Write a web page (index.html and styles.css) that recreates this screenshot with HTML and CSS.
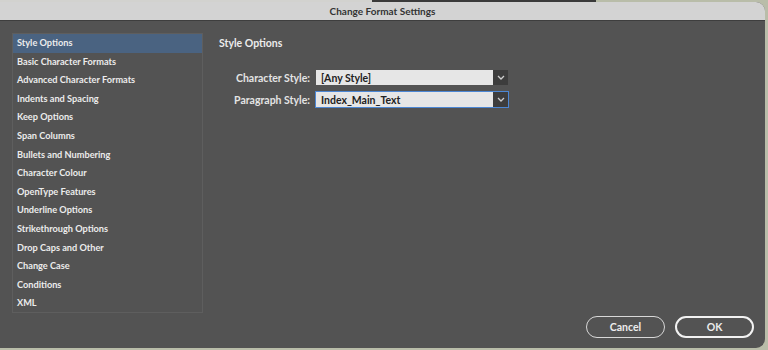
FILE: index.html
```html
<!DOCTYPE html>
<html>
<head>
<meta charset="utf-8">
<link rel="stylesheet" href="styles.css">
</head>
<body>
<div class="backdrop">
  <div class="strip"><span class="s1"></span><span class="s2"></span><span class="s3"></span></div>
  <div class="dialog">
    <div class="titlebar">Change Format Settings</div>
    <div class="content">
      <div class="main">
        <ul class="list">
          <li class="selected">Style Options</li>
          <li>Basic Character Formats</li>
          <li>Advanced Character Formats</li>
          <li>Indents and Spacing</li>
          <li>Keep Options</li>
          <li>Span Columns</li>
          <li>Bullets and Numbering</li>
          <li>Character Colour</li>
          <li>OpenType Features</li>
          <li>Underline Options</li>
          <li>Strikethrough Options</li>
          <li>Drop Caps and Other</li>
          <li>Change Case</li>
          <li>Conditions</li>
          <li>XML</li>
        </ul>
        <div class="panel">
          <h2 class="heading">Style Options</h2>
          <div class="fields">
            <div class="field">
              <span class="label">Character Style:</span>
              <div class="select">
                <span class="value">[Any Style]</span>
                <span class="arrow"><svg width="8" height="5" viewBox="0 0 8 5"><path d="M1 1 L4 4 L7 1" fill="none" stroke="#cfcfcf" stroke-width="1.3"/></svg></span>
              </div>
            </div>
            <div class="field">
              <span class="label">Paragraph Style:</span>
              <div class="select focused">
                <span class="value">Index_Main_Text</span>
                <span class="arrow"><svg width="8" height="5" viewBox="0 0 8 5"><path d="M1 1 L4 4 L7 1" fill="none" stroke="#cfcfcf" stroke-width="1.3"/></svg></span>
              </div>
            </div>
          </div>
        </div>
      </div>
      <div class="footer">
        <button class="btn">Cancel</button>
        <button class="btn primary">OK</button>
      </div>
    </div>
  </div>
</div>
</body>
</html>
```

FILE: styles.css
```css
* { box-sizing: border-box; }
html, body { margin: 0; padding: 0; }
body {
  width: 768px;
  height: 350px;
  overflow: hidden;
  background: #b9bda9;
  font-family: "Lato", "Open Sans", "Liberation Sans", sans-serif;
}
.backdrop { width: 768px; height: 350px; overflow: hidden; }
.strip { display: flex; height: 2px; }
.strip .s1 { width: 372px; background: #d2d2cf; }
.strip .s2 { width: 224px; background: #3a3a3a; }
.strip .s3 { flex: 1; background: #b9bda9; }
.dialog {
  width: 775px;
  height: 346px;
  margin-left: -10px;
  border-radius: 9px;
  overflow: hidden;
  background: #535353;
  display: flex;
  flex-direction: column;
}
.titlebar {
  height: 19px;
  background: #d3d3d3;
  border-bottom: 1px solid #3e3e3e;
  color: #333;
  font-size: 10px;
  font-weight: 700;
  text-align: center;
  line-height: 18px;
  padding-left: 10px;
}
.content {
  flex: 1;
  padding: 12px 11px 10px 22px;
  display: flex;
  flex-direction: column;
}
.main { display: flex; gap: 16px; height: 280px; }
.list {
  list-style: none;
  margin: 0;
  padding: 0;
  width: 191px;
  height: 280px;
  border: 1px solid #5e5e5e;
}
.list li {
  height: 18.6px;
  line-height: 18.6px;
  padding-left: 4px;
  font-size: 9.2px;
  font-weight: 700;
  color: #ececec;
  white-space: nowrap;
}
.list li.selected { background: #4a6381; }
.panel { flex: 1; color: #ececec; }
.heading {
  margin: 0;
  font-size: 10.5px;
  font-weight: 700;
  line-height: 20px;
}
.fields {
  margin-top: 16px;
  display: flex;
  flex-direction: column;
  gap: 5px;
}
.field { display: flex; align-items: center; }
.label {
  width: 96px;
  text-align: right;
  padding-right: 5px;
  font-size: 10.5px;
  font-weight: 700;
  color: #e4e4e4;
}
.select {
  width: 194px;
  height: 17px;
  display: flex;
  border: 1px solid transparent;
}
.select .value {
  flex: 1;
  background: #e6e6e6;
  color: #222;
  font-size: 10.5px;
  font-weight: 700;
  line-height: 16px;
  padding-left: 5px;
}
.select .arrow {
  width: 15px;
  background: #3d3d3d;
  display: flex;
  align-items: center;
  justify-content: center;
}
.select.focused { border-color: #4c87d4; }
.footer {
  margin-top: 3px;
  display: flex;
  justify-content: flex-end;
  gap: 10px;
}
.btn {
  width: 79px;
  height: 22px;
  border-radius: 11px;
  background: transparent;
  border: 1.3px solid #d8d8d8;
  color: #ececec;
  font-family: inherit;
  font-size: 10.5px;
  font-weight: 700;
  padding: 0;
}
.btn.primary { border: 2px solid #f2f2f2; }
```
